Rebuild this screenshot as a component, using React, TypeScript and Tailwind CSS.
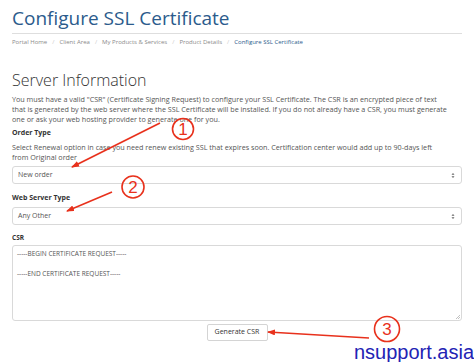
import React from "react";

function SelectBox({ value }: { value: string }) {
  return (
    <div className="mt-[4px] h-[18px] w-[450px] rounded-[3px] border border-[#d9d9d9] flex items-center justify-between pl-[5px] pr-[6px] text-[7px] text-[#555]">
      <span>{value}</span>
      <svg width="4" height="7" viewBox="0 0 4 7">
        <path d="M0.5 2.8 L2 1 L3.5 2.8 Z" fill="#666" />
        <path d="M0.5 4.2 L2 6 L3.5 4.2 Z" fill="#666" />
      </svg>
    </div>
  );
}

function Annotations() {
  return (
    <svg className="absolute inset-0 pointer-events-none" width="474" height="362" viewBox="0 0 474 362">
      <defs>
        <marker id="head" markerWidth="8" markerHeight="6" refX="7" refY="3" orient="auto" markerUnits="userSpaceOnUse">
          <path d="M0 0 L8 3 L0 6 Z" fill="#e8311c" />
        </marker>
      </defs>
      <g stroke="#e8311c" fill="none" strokeWidth="1.6">
        <circle cx="183" cy="129" r="10.5" />
        <circle cx="133" cy="187" r="11" />
        <circle cx="387" cy="329" r="12.5" />
        <line x1="160" y1="123" x2="72" y2="167" markerEnd="url(#head)" />
        <line x1="112" y1="192" x2="67" y2="211" markerEnd="url(#head)" />
        <line x1="369" y1="338" x2="268" y2="332" markerEnd="url(#head)" />
      </g>
      <g fill="#e8311c" fontFamily="'Liberation Sans', Arial, sans-serif" fontSize="17" textAnchor="middle">
        <text x="183" y="135">1</text>
        <text x="133" y="193">2</text>
        <text x="387" y="335">3</text>
      </g>
    </svg>
  );
}

export default function App() {
  return (
    <div className="relative w-[474px] h-[362px] overflow-hidden bg-white font-['Open_Sans',sans-serif]">
      <div className="px-[12px]">
        <h1 className="pt-[5px] text-[19px] leading-[26px] text-[#2b5b8c]">Configure SSL Certificate</h1>
        <div className="mt-[2px] w-[450px] border-t border-[#dedede]" />
        <nav className="mt-[4px] flex items-center gap-[5px] text-[6px] text-[#8a8a8a]">
          <span>Portal Home</span>
          <span className="text-[#ccc]">/</span>
          <span>Client Area</span>
          <span className="text-[#ccc]">/</span>
          <span>My Products &amp; Services</span>
          <span className="text-[#ccc]">/</span>
          <span>Product Details</span>
          <span className="text-[#ccc]">/</span>
          <span className="text-[#2b5b8c]">Configure SSL Certificate</span>
        </nav>

        <h2 className="mt-[22px] text-[16px] leading-[22px] font-light text-[#333]">Server Information</h2>
        <p className="mt-[3px] text-[7.2px] leading-[10px] text-[#555] whitespace-nowrap">
          You must have a valid "CSR" (Certificate Signing Request) to configure your SSL Certificate. The CSR is an encrypted piece of text
          <br />
          that is generated by the web server where the SSL Certificate will be installed. If you do not already have a CSR, you must generate
          <br />
          one or ask your web hosting provider to generate one for you.
        </p>

        <div className="mt-[4px] text-[7px] leading-[10px] font-bold text-[#333]">Order Type</div>
        <p className="mt-[4px] text-[7.2px] leading-[10px] text-[#555] whitespace-nowrap">
          Select Renewal option in case you need renew existing SSL that expires soon. Certification center would add up to 90-days left
          <br />
          from Original order
        </p>
        <SelectBox value="New order" />

        <div className="mt-[9px] text-[7px] leading-[10px] font-bold text-[#333]">Web Server Type</div>
        <SelectBox value="Any Other" />

        <div className="mt-[8px] text-[6.5px] leading-[10px] font-bold text-[#333]">CSR</div>
        <div className="relative mt-[2px] h-[76px] w-[450px] rounded-[3px] border border-[#d9d9d9] px-[4px] pt-[3px] text-[6.5px] leading-[10px] text-[#555]">
          <div>-----BEGIN CERTIFICATE REQUEST-----</div>
          <div>&nbsp;</div>
          <div>-----END CERTIFICATE REQUEST-----</div>
          <svg className="absolute right-[1px] bottom-[1px]" width="5" height="5" viewBox="0 0 5 5">
            <path d="M5 1 L1 5 M5 3 L3 5" stroke="#999" strokeWidth="0.6" />
          </svg>
        </div>

        <div className="mt-[3px] flex justify-center">
          <button className="h-[17px] w-[61px] rounded-[2px] border border-[#d4d4d4] bg-white text-[7px] text-[#333]">
            Generate CSR
          </button>
        </div>
      </div>

      <Annotations />

      <div className="absolute right-0 bottom-0 font-['Liberation_Sans',Arial,sans-serif] text-[20px] leading-[19px] text-[#2323b4]">
        nsupport.asia
      </div>
    </div>
  );
}
